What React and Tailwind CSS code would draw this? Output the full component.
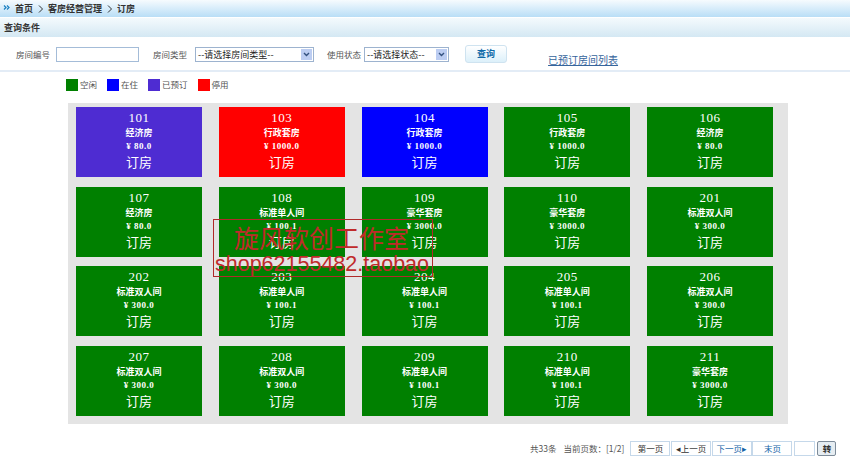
const PURPLE = 'bg-[#4e2cd2]'
const RED = 'bg-[#ff0000]'
const BLUE = 'bg-[#0000ff]'
const GREEN = 'bg-[#008000]'

const rooms = [
  ['101', '经济房', '80.0', PURPLE],
  ['103', '行政套房', '1000.0', RED],
  ['104', '行政套房', '1000.0', BLUE],
  ['105', '行政套房', '1000.0', GREEN],
  ['106', '经济房', '80.0', GREEN],
  ['107', '经济房', '80.0', GREEN],
  ['108', '标准单人间', '100.1', GREEN],
  ['109', '豪华套房', '3000.0', GREEN],
  ['110', '豪华套房', '3000.0', GREEN],
  ['201', '标准双人间', '300.0', GREEN],
  ['202', '标准双人间', '300.0', GREEN],
  ['203', '标准单人间', '100.1', GREEN],
  ['204', '标准单人间', '100.1', GREEN],
  ['205', '标准单人间', '100.1', GREEN],
  ['206', '标准双人间', '300.0', GREEN],
  ['207', '标准双人间', '300.0', GREEN],
  ['208', '标准双人间', '300.0', GREEN],
  ['209', '标准单人间', '100.1', GREEN],
  ['210', '标准单人间', '100.1', GREEN],
  ['211', '豪华套房', '3000.0', GREEN],
]

const legend = [
  ['空闲', GREEN],
  ['在住', BLUE],
  ['已预订', PURPLE],
  ['停用', RED],
]

function Chevron() {
  return (
    <svg width="9" height="9" viewBox="0 0 9 9" className="text-[#1a7fc0]">
      <path d="M1 1.5 L3 3.5 L1 5.5" fill="none" stroke="currentColor" strokeWidth="1.2" />
      <path d="M4 1.5 L6 3.5 L4 5.5" fill="none" stroke="currentColor" strokeWidth="1.2" />
    </svg>
  )
}

function Crumb() {
  return (
    <svg width="6" height="8" viewBox="0 0 6 8" className="ml-[5px] mr-[4px]">
      <path d="M1 0.5 L4.5 4 L1 7.5" fill="none" stroke="#333" strokeWidth="1" />
    </svg>
  )
}

function FakeSelect({ label, width }) {
  return (
    <div className={`h-[15px] border border-[#9db3cf] bg-white flex items-center justify-between pl-[2px] pr-[1px] text-[9px] text-[#222] ${width}`}>
      <span className="whitespace-nowrap">{label}</span>
      <span className="w-[11px] h-[11px] bg-[#bccdf2] flex items-center justify-center">
        <svg width="7" height="5" viewBox="0 0 7 5">
          <path d="M1 1 L3.5 3.5 L6 1" fill="none" stroke="#33507f" strokeWidth="1.4" />
        </svg>
      </span>
    </div>
  )
}

function RoomCard({ no, type, price, color }) {
  return (
    <div className={`${color} h-[70px] flex flex-col items-center text-white pt-[3px]`}>
      <div className="text-[13px] leading-[16px] tracking-[0.5px] font-['Liberation_Serif',serif]">{no}</div>
      <div className="text-[9px] leading-[13px] font-bold">{type}</div>
      <div className="text-[9px] leading-[13px] mt-px font-bold tracking-[0.5px] font-['Liberation_Serif','Noto_Sans_CJK_SC',serif]">¥ {price}</div>
      <div className="text-[13px] leading-[18px]">订房</div>
    </div>
  )
}

function PageBtn({ children, blue }) {
  return (
    <div className={`h-[15px] w-[40px] border border-[#c5d8ea] bg-white flex items-center justify-center text-[8.5px] ${blue ? 'text-[#1263a8]' : 'text-[#333]'}`}>
      {children}
    </div>
  )
}

export default function App() {
  return (
    <div className="relative w-[850px] h-[456px] overflow-hidden bg-white font-['Noto_Sans_CJK_SC',sans-serif] text-[#444]">
      {/* 面包屑 */}
      <div className="h-[17px] bg-gradient-to-b from-[#f6fbfe] to-[#b9def6] flex items-center pl-[3px] text-[9px] font-bold text-[#333]">
        <Chevron />
        <span className="ml-[3px]">首页</span>
        <Crumb />
        <span>客房经营管理</span>
        <Crumb />
        <span>订房</span>
      </div>
      <div className="h-[19px] mt-px bg-gradient-to-b from-[#f4fafd] to-[#d4e8f3] flex items-center pl-[4px] text-[9px] font-bold text-[#333]">
        查询条件
      </div>

      {/* 查询条件 */}
      <div className="h-[35px] border-b-2 border-[#e3ecf6] flex items-center pl-[16px] pt-[2px] text-[8.5px] text-[#555]">
        <span>房间编号</span>
        <div className="ml-[6px] w-[83px] h-[15px] border border-[#a4bcd8] bg-white" />
        <span className="ml-[14px]">房间类型</span>
        <div className="ml-[8px]"><FakeSelect label="--请选择房间类型--" width="w-[119px]" /></div>
        <span className="ml-[13px]">使用状态</span>
        <div className="ml-[3px]"><FakeSelect label="--请选择状态--" width="w-[85px]" /></div>
        <div className="ml-[16px] mb-px w-[42px] h-[18px] rounded-[3px] border border-[#cfe3f0] bg-gradient-to-b from-white to-[#dcf0fa] flex items-center justify-center text-[9px] font-bold text-[#0f6aa8]">
          查询
        </div>
        <a className="ml-[41px] mt-[10px] text-[10px] leading-none text-[#36659c] underline">已预订房间列表</a>
      </div>

      {/* 图例 */}
      <div className="h-[31px] pl-[66px] pt-[7px] flex items-start gap-[10px] text-[8.5px] text-[#555]">
        {legend.map(([name, color]) => (
          <div key={name} className="flex items-center gap-[2px]">
            <span className={`w-[12px] h-[12px] ${color}`} />
            <span className="leading-[11px] mb-px">{name}</span>
          </div>
        ))}
      </div>

      {/* 房间 */}
      <div className="ml-[68px] w-[720px] h-[321px] bg-[#e4e4e4] pt-[4px] pl-[8px] grid grid-cols-[repeat(5,126px)] gap-x-[16.75px] gap-y-[9.7px] content-start">
        {rooms.map((r) => (
          <RoomCard key={r[0]} no={r[0]} type={r[1]} price={r[2]} color={r[3]} />
        ))}
      </div>

      {/* 分页 */}
      <div className="mt-[17px] pl-[530px] flex items-center text-[8.5px] text-[#555]">
        <span>共33条</span>
        <span className="ml-[7px]">当前页数：[1/2]</span>
        <div className="ml-[6px] flex gap-[0.67px]">
          <PageBtn>第一页</PageBtn>
          <PageBtn>◂上一页</PageBtn>
          <PageBtn blue>下一页▸</PageBtn>
          <PageBtn blue>末页</PageBtn>
        </div>
        <div className="ml-[2px] w-[21px] h-[15px] border border-[#c5d8ea] bg-white" />
        <div className="ml-[2px] w-[19px] h-[15px] rounded-[2px] border border-[#7d8b99] bg-[#e6edf2] flex items-center justify-center font-bold text-[#333]">转</div>
      </div>

      {/* 水印 */}
      <div className="absolute left-[213px] top-[219px] w-[220px] h-[58px] border border-[#b02a2a] text-[#c02a2a] overflow-visible">
        <div className="pl-[20px] text-[25px] leading-[34px] whitespace-nowrap">旋风软创工作室</div>
        <div className="pl-[1px] text-[21.5px] leading-[20px] whitespace-nowrap font-['Liberation_Sans',sans-serif]">shop62155482.taobao</div>
      </div>
    </div>
  )
}
